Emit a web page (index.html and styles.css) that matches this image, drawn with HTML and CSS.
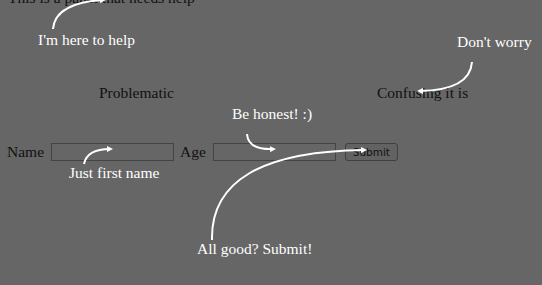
FILE: index.html
```html
<!DOCTYPE html>
<html lang="en">

<head>
    <meta charset="UTF-8">
    <title>Help overlay</title>
    <link rel="stylesheet" href="styles.css">
</head>

<body>
    <div class="page">
        <div class="panel">This is a panel that needs help</div>
        <div class="cells">
            <div class="cell first">Problematic</div>
            <div class="cell">Confusing it is</div>
        </div>
        <form class="form">
            <label>Name</label>
            <input type="text" class="field">
            <label>Age</label>
            <input type="text" class="field">
            <button type="button" class="submit">Submit</button>
        </form>
    </div>

    <!-- help layer -->
    <div class="helps">
        <span class="help" style="left: 38px; top: 31px">I'm here to help</span>
        <span class="help" style="left: 457px; top: 33px">Don't worry</span>
        <span class="help" style="left: 232px; top: 105px">Be honest! :)</span>
        <span class="help" style="left: 69px; top: 164px">Just first name</span>
        <span class="help" style="left: 197px; top: 240px">All good? Submit!</span>
        <svg class="arrows" width="542" height="285" viewBox="0 0 542 285">
            <defs>
                <marker id="head" markerWidth="6" markerHeight="6" refX="3" refY="3" orient="auto" markerUnits="userSpaceOnUse">
                    <path d="M0,0 L6,3 L0,6 Z" fill="#fff" />
                </marker>
            </defs>
            <g fill="none" stroke="#fff" stroke-width="2" marker-end="url(#head)">
                <path d="M53,29 Q55,3 103,0" />
                <path d="M472,62 Q470,90 420,91" />
                <path d="M84,164 Q87,149 110,149" />
                <path d="M247,134 Q248,150 273,149" />
                <path d="M212,240 Q210,152 364,150" />
            </g>
        </svg>
    </div>
</body>

</html>
```

FILE: styles.css
```css
* {
    margin: 0;
    padding: 0;
    box-sizing: border-box;
}

body {
    background-color: #666;
    font-family: "Liberation Serif", serif;
    font-size: 15.5px;
    color: #111;
    overflow: hidden;
}

.page {
    padding: 0 7px;
}

.panel {
    margin-top: -11px;
    padding-left: 1px;
    line-height: 18px;
}

.cells {
    display: flex;
    gap: 203px;
    margin-top: 77px;
    padding-left: 92px;
    line-height: 18px;
}

.form {
    display: flex;
    align-items: center;
    margin-top: 41px;
    line-height: 18px;
}

.form label {
    margin-right: 7px;
}

.field {
    width: 123px;
    height: 18px;
    border: 1px solid #444;
    background: transparent;
    margin-right: 6px;
}

.submit {
    margin-left: 3px;
    width: 53px;
    height: 18px;
    border: 1px solid #404040;
    border-radius: 3px;
    background-color: #626262;
    font-family: "DejaVu Sans", sans-serif;
    font-size: 10.5px;
    color: #111;
}

.helps {
    position: absolute;
    left: 0;
    top: 0;
    width: 542px;
    height: 285px;
}

.help {
    position: absolute;
    color: #fff;
    line-height: 18px;
    white-space: nowrap;
}

.arrows {
    position: absolute;
    left: 0;
    top: 0;
}
```
